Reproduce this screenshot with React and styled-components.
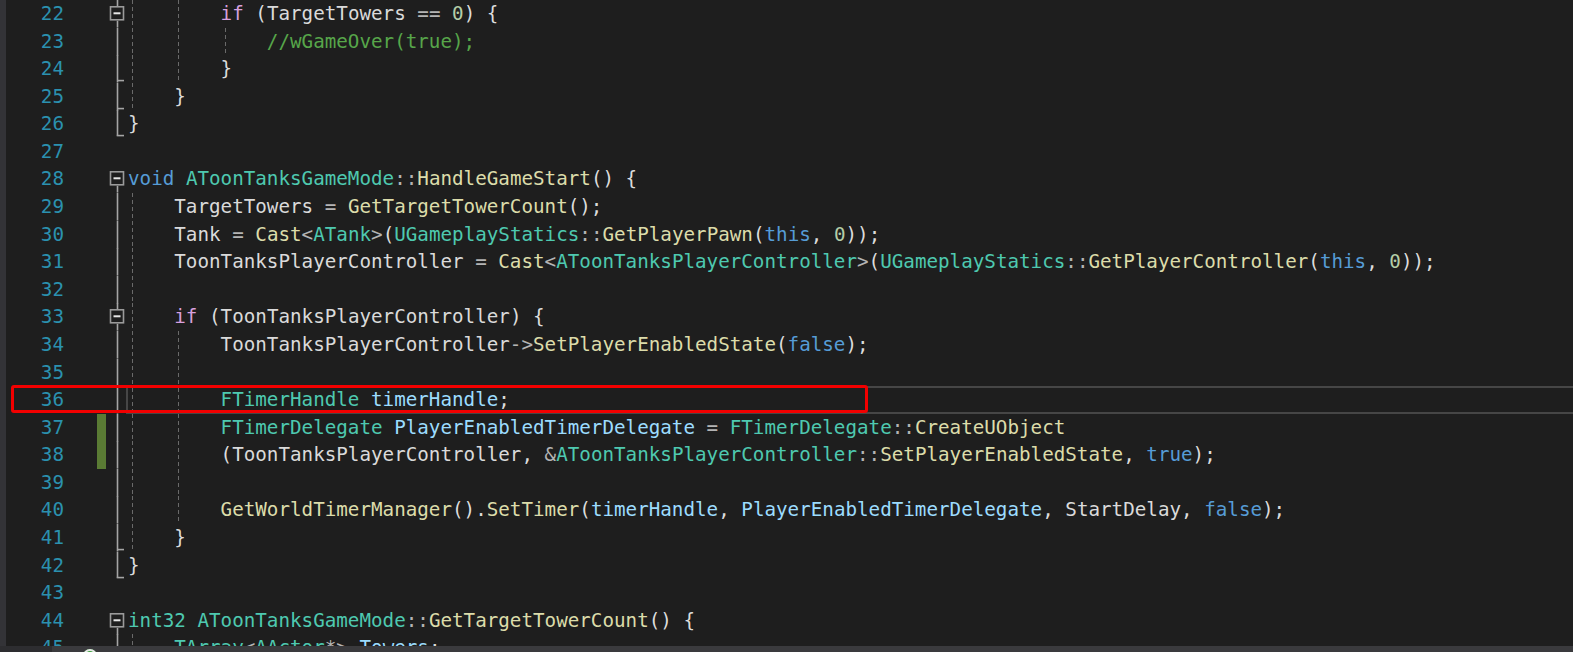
import React from "react";
import styled, { createGlobalStyle } from "styled-components";

const H = 27.58;
const CH = 11.58;
const FONT = 19.236;

const GlobalStyle = createGlobalStyle`
  html, body { margin: 0; padding: 0; background: #1e1e1e; overflow: hidden; }
`;

const COLORS = {
  k: "#569cd6",
  c: "#d8a0df",
  t: "#4ec9b0",
  fn: "#dcdcaa",
  f: "#dadada",
  v: "#9cdcfe",
  n: "#b5cea8",
  o: "#b4b4b4",
  p: "#dcdcdc",
  cm: "#57a64a",
};

const Window = styled.div`
  width: 1573px;
  height: 652px;
  display: flex;
  flex-direction: column;
  overflow: hidden;
  background: #1e1e1e;
  font-family: "DejaVu Sans Mono", "Liberation Mono", monospace;
  font-size: ${FONT}px;
`;

const Main = styled.div`
  flex: 0 0 646px;
  display: flex;
  overflow: hidden;
`;

const LeftStrip = styled.div`
  flex: 0 0 6px;
  background: #333337;
`;

const Editor = styled.div`
  flex: 1;
  position: relative;
  overflow: hidden;
  display: flex;
  flex-direction: column;
`;

const Row = styled.div`
  flex: 0 0 ${H}px;
  height: ${H}px;
  display: grid;
  grid-template-columns: 58px 33px 9px 20px 1fr;
`;

const LineNo = styled.div`
  text-align: right;
  color: #2b91af;
  line-height: ${H}px;
  white-space: pre;
`;

const Spacer = styled.div``;

const ChangeMark = styled.div`
  background: ${(p) => (p.$changed ? "#5a7b34" : "transparent")};
`;

const FoldCell = styled.div`
  position: relative;
`;

const FoldSvg = styled.svg`
  display: block;
  width: 20px;
  height: ${H}px;
  overflow: visible;
`;

const Code = styled.div`
  position: relative;
  box-sizing: border-box;
  white-space: pre;
  color: #dcdcdc;
  padding-left: ${(p) => (p.$current ? 0 : 2)}px;
  line-height: ${(p) => (p.$current ? H - 4 : H)}px;
  border: ${(p) => (p.$current ? "2px solid #464646" : "none")};
  border-right: none;
`;

const Guide = styled.span`
  position: absolute;
  top: 0;
  bottom: 0;
  width: 1px;
  background: repeating-linear-gradient(
    to bottom,
    #6a6a6a 0px,
    #6a6a6a 4px,
    transparent 4px,
    transparent 7px
  );
`;

const Token = styled.span`
  color: ${(p) => COLORS[p.$c] || "#dcdcdc"};
`;

const Callout = styled.div`
  position: absolute;
  left: 5px;
  top: 385px;
  width: 857px;
  height: 28px;
  box-sizing: border-box;
  border: 3px solid #f20000;
  border-radius: 3px;
  pointer-events: none;
`;

const BottomBar = styled.div`
  flex: 0 0 6px;
  display: flex;
  overflow: hidden;
  background: #3a3a3d;
`;

const BottomLeft = styled.div`
  flex: 0 0 52px;
  background: #2d2d30;
`;

const StatusDot = styled.div`
  flex: 0 0 14px;
  height: 14px;
  margin-left: 31px;
  margin-top: 3px;
  border-radius: 50%;
  background: #3ba33b;
  box-shadow: inset 0 0 0 2px #e8e8e8;
`;

function Fold({ kind }) {
  if (!kind) return null;
  const stroke = "#a5a5a5";
  const lx = 11.5;
  const boxTop = H / 2 - 7;
  const boxBot = H / 2 + 7;
  return (
    <FoldSvg>
      {(kind === "line" || kind === "tick") && (
        <line x1={lx} y1={0} x2={lx} y2={H} stroke={stroke} strokeWidth="1.6" />
      )}
      {kind === "tick" && (
        <line x1={lx} y1={H - 2} x2={18} y2={H - 2} stroke={stroke} strokeWidth="1.6" />
      )}
      {kind === "end" && (
        <>
          <line x1={lx} y1={0} x2={lx} y2={H - 2} stroke={stroke} strokeWidth="1.6" />
          <line x1={lx - 0.8} y1={H - 2} x2={18} y2={H - 2} stroke={stroke} strokeWidth="1.6" />
        </>
      )}
      {(kind === "box" || kind === "start") && (
        <>
          {kind === "box" && (
            <line x1={lx} y1={0} x2={lx} y2={boxTop} stroke={stroke} strokeWidth="1.6" />
          )}
          <line x1={lx} y1={boxBot} x2={lx} y2={H} stroke={stroke} strokeWidth="1.6" />
          <rect x={4.5} y={boxTop} width={13} height={13} fill="#1e1e1e" stroke="#9a9a9a" strokeWidth="1.6" />
          <line x1={7.5} y1={H / 2 - 0.5} x2={14.5} y2={H / 2 - 0.5} stroke="#e6e6e6" strokeWidth="2" />
        </>
      )}
    </FoldSvg>
  );
}

const LINES = [
  { n: 22, i: 2, g: [0, 1], fold: "box", t: [["c", "if"], ["p", " ("], ["f", "TargetTowers"], ["o", " == "], ["n", "0"], ["p", ") {"]] },
  { n: 23, i: 3, g: [0, 1, 2], fold: "line", t: [["cm", "//wGameOver(true);"]] },
  { n: 24, i: 2, g: [0, 1], fold: "tick", t: [["p", "}"]] },
  { n: 25, i: 1, g: [0], fold: "tick", t: [["p", "}"]] },
  { n: 26, i: 0, g: [], fold: "end", t: [["p", "}"]] },
  { n: 27, i: 0, g: [], t: [] },
  { n: 28, i: 0, g: [], fold: "start", t: [["k", "void"], ["p", " "], ["t", "AToonTanksGameMode"], ["o", "::"], ["fn", "HandleGameStart"], ["p", "() {"]] },
  { n: 29, i: 1, g: [0], fold: "line", t: [["f", "TargetTowers"], ["o", " = "], ["fn", "GetTargetTowerCount"], ["p", "();"]] },
  { n: 30, i: 1, g: [0], fold: "line", t: [["f", "Tank"], ["o", " = "], ["fn", "Cast"], ["o", "<"], ["t", "ATank"], ["o", ">"], ["p", "("], ["t", "UGameplayStatics"], ["o", "::"], ["fn", "GetPlayerPawn"], ["p", "("], ["k", "this"], ["p", ", "], ["n", "0"], ["p", "));"]] },
  { n: 31, i: 1, g: [0], fold: "line", t: [["f", "ToonTanksPlayerController"], ["o", " = "], ["fn", "Cast"], ["o", "<"], ["t", "AToonTanksPlayerController"], ["o", ">"], ["p", "("], ["t", "UGameplayStatics"], ["o", "::"], ["fn", "GetPlayerController"], ["p", "("], ["k", "this"], ["p", ", "], ["n", "0"], ["p", "));"]] },
  { n: 32, i: 0, g: [0], fold: "line", t: [] },
  { n: 33, i: 1, g: [0], fold: "box", t: [["c", "if"], ["p", " ("], ["f", "ToonTanksPlayerController"], ["p", ") {"]] },
  { n: 34, i: 2, g: [0, 1], fold: "line", t: [["f", "ToonTanksPlayerController"], ["o", "->"], ["fn", "SetPlayerEnabledState"], ["p", "("], ["k", "false"], ["p", ");"]] },
  { n: 35, i: 0, g: [0, 1], fold: "line", t: [] },
  { n: 36, i: 2, g: [0, 1], fold: "line", current: true, t: [["t", "FTimerHandle"], ["p", " "], ["v", "timerHandle"], ["p", ";"]] },
  { n: 37, i: 2, g: [0, 1], fold: "line", changed: true, t: [["t", "FTimerDelegate"], ["p", " "], ["v", "PlayerEnabledTimerDelegate"], ["o", " = "], ["t", "FTimerDelegate"], ["o", "::"], ["fn", "CreateUObject"]] },
  { n: 38, i: 2, g: [0, 1], fold: "line", changed: true, t: [["p", "("], ["f", "ToonTanksPlayerController"], ["p", ", "], ["o", "&"], ["t", "AToonTanksPlayerController"], ["o", "::"], ["fn", "SetPlayerEnabledState"], ["p", ", "], ["k", "true"], ["p", ");"]] },
  { n: 39, i: 0, g: [0, 1], fold: "line", t: [] },
  { n: 40, i: 2, g: [0, 1], fold: "line", t: [["fn", "GetWorldTimerManager"], ["p", "()."], ["fn", "SetTimer"], ["p", "("], ["v", "timerHandle"], ["p", ", "], ["v", "PlayerEnabledTimerDelegate"], ["p", ", "], ["f", "StartDelay"], ["p", ", "], ["k", "false"], ["p", ");"]] },
  { n: 41, i: 1, g: [0], fold: "tick", t: [["p", "}"]] },
  { n: 42, i: 0, g: [], fold: "end", t: [["p", "}"]] },
  { n: 43, i: 0, g: [], t: [] },
  { n: 44, i: 0, g: [], fold: "start", t: [["t", "int32"], ["p", " "], ["t", "AToonTanksGameMode"], ["o", "::"], ["fn", "GetTargetTowerCount"], ["p", "() {"]] },
  { n: 45, i: 1, g: [0], fold: "line", t: [["t", "TArray"], ["o", "<"], ["t", "AActor"], ["o", "*>"], ["p", " "], ["v", "Towers"], ["p", ";"]] },
];

export default function App() {
  return (
    <Window>
      <GlobalStyle />
      <Main>
        <LeftStrip />
        <Editor>
          {LINES.map((ln) => (
            <Row key={ln.n}>
              <LineNo>{ln.n}</LineNo>
              <Spacer />
              <ChangeMark $changed={ln.changed} />
              <FoldCell>
                <Fold kind={ln.fold} />
              </FoldCell>
              <Code $current={ln.current}>
                {ln.g.map((lv) => (
                  <Guide key={lv} style={{ left: (ln.current ? 4 : 6) + lv * CH * 4 }} />
                ))}
                {" ".repeat(ln.i * 4)}
                {ln.t.map(([c, s], idx) => (
                  <Token key={idx} $c={c}>
                    {s}
                  </Token>
                ))}
              </Code>
            </Row>
          ))}
          <Callout />
        </Editor>
      </Main>
      <BottomBar>
        <BottomLeft />
        <StatusDot />
      </BottomBar>
    </Window>
  );
}
